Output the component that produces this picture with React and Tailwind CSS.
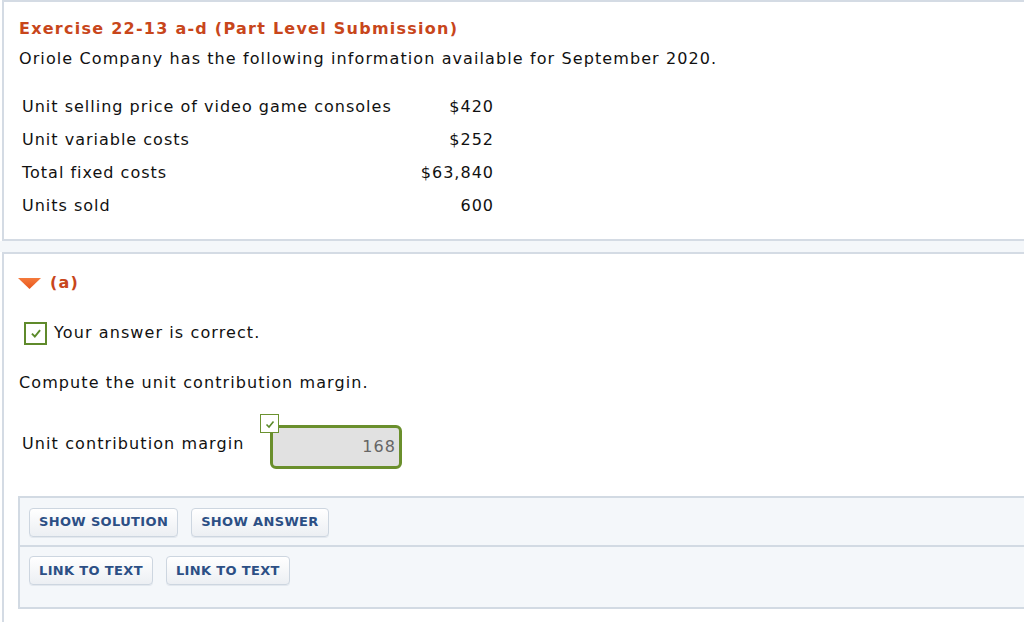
import React from "react";

const rows = [
  ["Unit selling price of video game consoles", "$420"],
  ["Unit variable costs", "$252"],
  ["Total fixed costs", "$63,840"],
  ["Units sold", "600"],
];

const Check = ({ size = 12 }) => (
  <svg width={size} height={size} viewBox="0 0 12 12">
    <polyline points="2.5,6.5 5,9 9.5,3.5" fill="none" stroke="#5b8a2a" strokeWidth="1.6" />
  </svg>
);

const Btn = ({ children }) => (
  <button className="h-[29px] px-[9px] rounded-[4px] border border-[#cdd6e0] bg-gradient-to-b from-white to-[#eceff3] text-[13px] font-bold text-[#2c4f85] tracking-[0.35px] shadow-[0_1px_0_#e3e8ee]">
    {children}
  </button>
);

const App = () => {
  return (
    <div className="w-[1024px] h-[622px] overflow-hidden bg-white font-['DejaVu_Sans','Verdana',sans-serif] text-[16px] tracking-[1.1px] text-[#111]">
      {/* intro card */}
      <div className="ml-[2px] h-[241px] border-l-2 border-t-2 border-b-2 border-[#d4dbe4] pl-[15px] pt-[15px]">
        <div className="text-[#c8461b] font-bold leading-[24px] tracking-[1.25px]">
          Exercise 22-13 a-d (Part Level Submission)
        </div>
        <div className="mt-[6px] leading-[24px]">
          Oriole Company has the following information available for September 2020.
        </div>
        <div className="mt-[19px] ml-[3px] grid grid-cols-[372px_100px] tracking-[1px]">
          {rows.map(([label, val]) => (
            <React.Fragment key={label}>
              <div className="h-[33px] flex items-center whitespace-nowrap">{label}</div>
              <div className="h-[33px] flex items-center justify-end">{val}</div>
            </React.Fragment>
          ))}
        </div>
      </div>

      <div className="h-[11px] bg-[#f4f7fa]" />

      {/* part (a) */}
      <div className="ml-[2px] h-[400px] border-l-2 border-t-2 border-[#d4dbe4] pt-[14px]">
        <div className="flex items-center h-[30px] pl-[14px]">
          <svg width="23" height="11" viewBox="0 0 23 11">
            <defs>
              <linearGradient id="tri" x1="0" y1="0" x2="0" y2="1">
                <stop offset="0" stopColor="#f47a3c" />
                <stop offset="1" stopColor="#e8561c" />
              </linearGradient>
            </defs>
            <polygon points="0,0 23,0 11.5,11" fill="url(#tri)" />
          </svg>
          <span className="ml-[9px] font-bold text-[#c8461b] tracking-[1.25px]">(a)</span>
        </div>

        <div className="mt-[22px] ml-[20px] flex items-center h-[26px]">
          <span className="w-[23px] h-[23px] border-2 border-[#5f8a2b] bg-white flex items-center justify-center">
            <Check size={14} />
          </span>
          <span className="ml-[7px]">Your answer is correct.</span>
        </div>

        <div className="mt-[25px] ml-[15px] leading-[24px]">Compute the unit contribution margin.</div>

        <div className="mt-[30px] ml-[18px] flex items-center">
          <span className="w-[248px] mb-[6px] whitespace-nowrap">Unit contribution margin</span>
          <div className="relative">
            <span className="absolute -left-[10px] -top-[11px] w-[19px] h-[19px] border border-[#6b9230] bg-white flex items-center justify-center z-10">
              <Check size={12} />
            </span>
            <div className="w-[132px] h-[44px] rounded-[6px] border-[3px] border-[#6a8f2c] bg-[#e1e1e1] flex items-center justify-end pr-[3px] text-[#666]">
              168
            </div>
          </div>
        </div>

        {/* action panel */}
        <div className="mt-[27px] ml-[14px] h-[113px] border-l-2 border-t-2 border-b-2 border-[#d2dae3] bg-[#f4f7fa]">
          <div className="h-[49px] flex items-center gap-[13px] pl-[9px] border-b-2 border-[#d2dae3] pt-[1px]">
            <Btn>SHOW SOLUTION</Btn>
            <Btn>SHOW ANSWER</Btn>
          </div>
          <div className="pt-[9px] flex gap-[13px] pl-[9px]">
            <Btn>LINK TO TEXT</Btn>
            <Btn>LINK TO TEXT</Btn>
          </div>
        </div>
      </div>
    </div>
  );
};

export default App;
